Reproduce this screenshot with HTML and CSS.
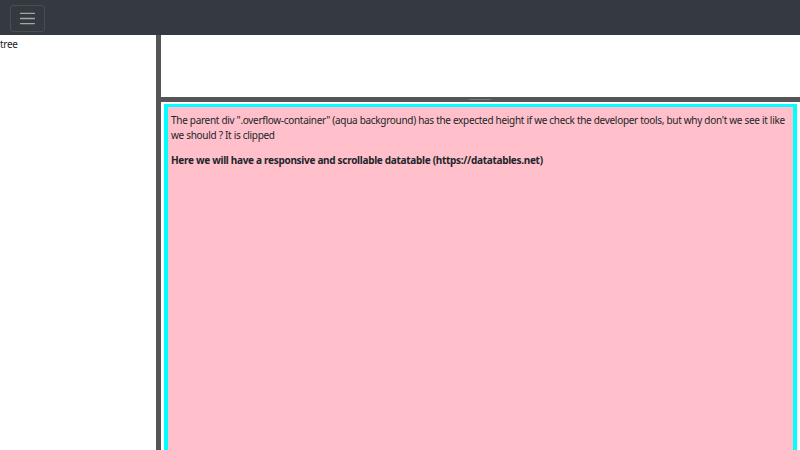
FILE: index.html
```html
<!DOCTYPE html>
<html lang="en">

<head>
  <meta charset="UTF-8" />
  <title>Split layout</title>
  <link rel="stylesheet" href="styles.css">
</head>

<body>
  <nav class="navbar">
    <button class="toggler" type="button">
      <svg width="19" height="19" viewBox="0 0 30 30">
        <path d="M4 7h22M4 15h22M4 23h22" stroke="rgba(255,255,255,.55)" stroke-width="2" stroke-linecap="round" />
      </svg>
    </button>
  </nav>

  <div class="main">
    <!-- 左侧树 -->
    <div class="sidebar">tree</div>
    <div class="gutter gutter-v"></div>
    <div class="content">
      <div class="top-pane"></div>
      <div class="gutter gutter-h"><span class="grip"></span></div>
      <div class="bottom-pane">
        <div class="overflow-container">
          <div class="inner">
            <p>The parent div ".overflow-container" (aqua background) has the expected height if we check the developer tools, but why don't we see it like we should ? It is clipped</p>
            <p class="bold">Here we will have a responsive and scrollable datatable (https://datatables.net)</p>
          </div>
        </div>
      </div>
    </div>
  </div>
</body>

</html>
```

FILE: styles.css
```css
body {
  margin: 0;
  padding: 0;
  height: 450px;
  display: flex;
  flex-direction: column;
  overflow: hidden;
  font-family: "Noto Sans", "Open Sans", sans-serif;
  font-size: 10px;
  line-height: 15px;
  letter-spacing: -0.3px;
  color: #212529;
  background-color: #fff;
}

.navbar {
  height: 35px;
  flex-shrink: 0;
  background-color: #343a40;
  display: flex;
  align-items: center;
  padding: 0 10px;
  box-sizing: border-box;
}

.toggler {
  width: 35px;
  height: 27px;
  padding: 0;
  margin-top: 1px;
  border: 1px solid rgba(255, 255, 255, .1);
  border-radius: 3px;
  background: transparent;
  display: flex;
  align-items: center;
  justify-content: center;
}

.main {
  flex: 1;
  display: flex;
  min-height: 0;
}

.sidebar {
  width: 156px;
  flex-shrink: 0;
  padding-top: 2px;
}

.gutter {
  background-color: #555;
  flex-shrink: 0;
}

.gutter-v {
  width: 5px;
}

.gutter-h {
  height: 5px;
  position: relative;
}

.grip {
  position: absolute;
  left: 308px;
  top: 2px;
  width: 22px;
  height: 1px;
  background-color: #777;
}

.content {
  flex: 1;
  display: flex;
  flex-direction: column;
  min-width: 0;
}

.top-pane {
  height: 62px;
  flex-shrink: 0;
}

.bottom-pane {
  flex: 1;
  padding: 2px 3px 0 3px;
  min-height: 0;
}

.overflow-container {
  height: 100%;
  padding: 3px 4px 0 4px;
  background-color: aqua;
  box-sizing: border-box;
}

.inner {
  height: 100%;
  background-color: pink;
  padding: 6px 3px;
  box-sizing: border-box;
}

.inner p {
  margin: 0 0 10px 0;
}

.bold {
  font-weight: bold;
}
```
